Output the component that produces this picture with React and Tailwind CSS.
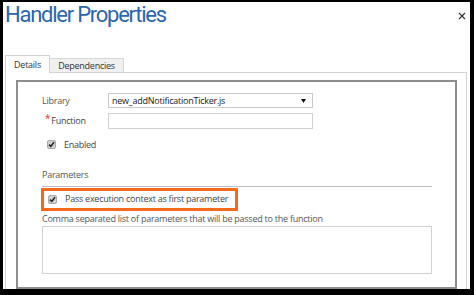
import React from "react";

/* ── small pieces ── */
function Check() {
  return (
    <span className="w-[9px] h-[9px] rounded-[2px] bg-[#cfcfcf] border border-[#a8a8a8] flex items-center justify-center shrink-0">
      <svg width="7" height="7" viewBox="0 0 7 7">
        <path d="M1 3.6 L2.8 5.4 L6 1.2" fill="none" stroke="#222" strokeWidth="1.5" />
      </svg>
    </span>
  );
}

function CloseX() {
  return (
    <svg width="8" height="8" viewBox="0 0 8 8" className="mt-[10px] mr-[4px]">
      <path d="M1 1 L7 7 M7 1 L1 7" stroke="#333" strokeWidth="1.2" />
    </svg>
  );
}

export default function App() {
  return (
    <div
      className="w-[474px] h-[295px] bg-black pt-[2px] pl-[3px] pr-[4px] pb-[6px] overflow-hidden tracking-[-0.25px]"
      style={{ fontFamily: '"Open Sans", "Noto Sans", sans-serif' }}
    >
      <div className="h-full bg-white flex flex-col">
        {/* ── Header ── */}
        <div className="h-[53px] flex justify-between items-start shrink-0">
          <h1
            className="ml-[2px] mt-0 text-[22px] leading-[26px] tracking-[-1.25px] text-[#2b65ae]"
            style={{ fontFamily: 'Roboto, "Liberation Sans", sans-serif' }}
          >
            Handler Properties
          </h1>
          <CloseX />
        </div>

        {/* ── Tabs ── */}
        <div className="flex items-end pl-[2px] shrink-0">
          <div className="w-[45px] h-[18px] bg-white border border-b-0 border-[#d2d2d2] -mb-px relative z-10 flex items-center justify-center text-[9px] text-[#333]">
            Details
          </div>
          <div className="w-[74px] h-[14px] bg-[#f0f0f0] border border-l-0 border-b-0 border-[#d6d6d6] flex items-center justify-center text-[9px] text-[#333]">
            Dependencies
          </div>
        </div>

        {/* ── Tab panel ── */}
        <div className="flex-1 ml-[2px] mr-[3px] border border-b-0 border-[#d2d2d2] pl-[10px] pr-[9px] pt-[7px]">
          <div className="h-[209px] border-2 border-[#8e8e8e] pl-[24px] pt-[11px] text-[9px] text-[#555]">
            {/* Library */}
            <div className="flex items-center">
              <span className="w-[66px]">Library</span>
              <div className="w-[205px] h-[15px] border border-[#c9c9c9] flex items-center justify-between pl-[3px] pr-[6px] text-[#222]">
                <span>new_addNotificationTicker.js</span>
                <svg width="5" height="4" viewBox="0 0 5 4">
                  <path d="M0 0 H5 L2.5 4 Z" fill="#111" />
                </svg>
              </div>
            </div>

            {/* Function */}
            <div className="flex items-center mt-[5px]">
              <span className="w-[66px] flex items-start pl-[3px] text-[#444]">
                <span className="text-[#e0302a] text-[10px] leading-[8px] mr-[1px]">*</span>
                Function
              </span>
              <div className="w-[205px] h-[16px] border border-[#d0d0d0]" />
            </div>

            {/* Enabled */}
            <div className="flex items-center mt-[9px] pl-[5px] gap-[8px]">
              <Check />
              <span className="text-[#444]">Enabled</span>
            </div>

            {/* Parameters */}
            <div className="mt-[17px] leading-[12px]">Parameters</div>
            <div className="w-[390px] h-[6px] border-b border-[#bdbdbd]" />

            <div className="w-[197px] h-[23px] border-[3px] border-[#f26a1d] -ml-[1px] mt-[1px] flex items-center pl-[4px] gap-[8px] text-[#444] whitespace-nowrap">
              <Check />
              <span>Pass execution context as first parameter</span>
            </div>

            <div className="mt-[2px] leading-[12px] whitespace-nowrap">
              Comma separated list of parameters that will be passed to the function
            </div>
            <div className="w-[390px] h-[48px] mt-[1px] border border-[#d2d2d2]" />
          </div>
        </div>
      </div>
    </div>
  );
}
